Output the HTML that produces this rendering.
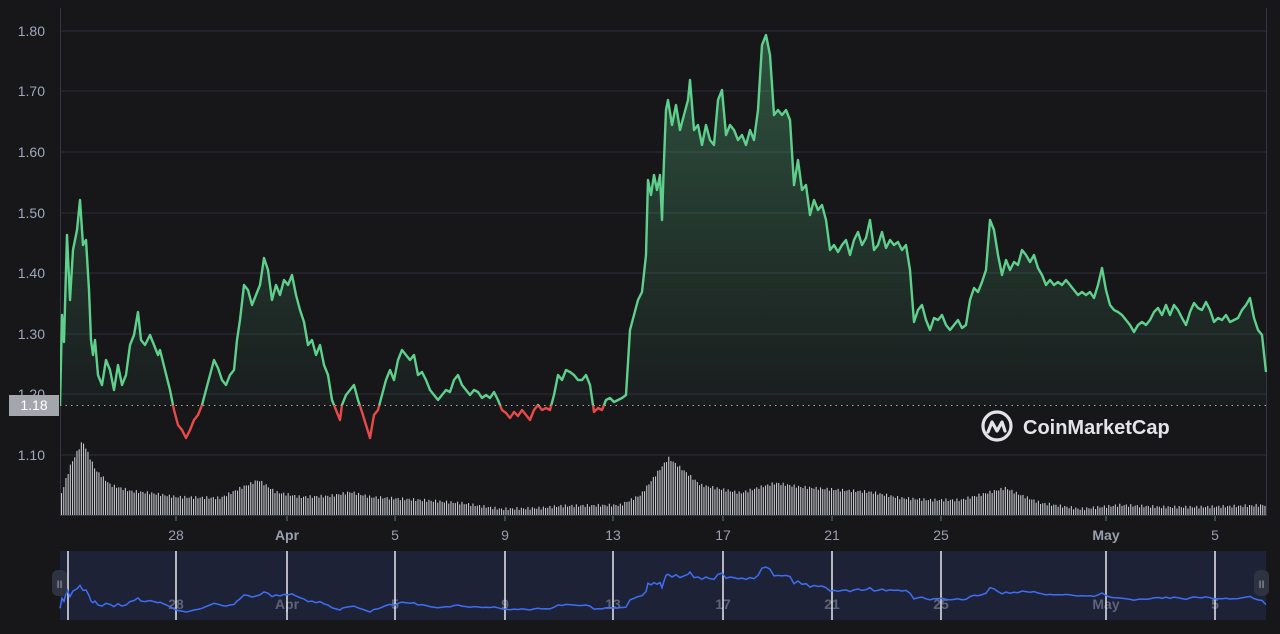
<!DOCTYPE html>
<html><head><meta charset="utf-8"><style>
html,body{margin:0;padding:0;background:#17171a;width:1280px;height:634px;overflow:hidden;font-family:"Liberation Sans",sans-serif}
svg{display:block}
</style></head><body>
<svg id="s" width="1280" height="634" xmlns="http://www.w3.org/2000/svg">
<defs>
<linearGradient id="g" gradientUnits="userSpaceOnUse" x1="0" y1="40" x2="0" y2="405">
<stop offset="0" stop-color="#5fd08c" stop-opacity="0.32"/><stop offset="1" stop-color="#5fd08c" stop-opacity="0.03"/></linearGradient>
<clipPath id="above"><rect x="60" y="0" width="1210" height="405"/></clipPath>
<clipPath id="below"><rect x="60" y="405" width="1210" height="100"/></clipPath>
</defs>
<g stroke="#2b2d3a" stroke-width="1">
<line x1="60" y1="31" x2="1266" y2="31"/><line x1="60" y1="91" x2="1266" y2="91"/><line x1="60" y1="152" x2="1266" y2="152"/><line x1="60" y1="213" x2="1266" y2="213"/><line x1="60" y1="273" x2="1266" y2="273"/><line x1="60" y1="334" x2="1266" y2="334"/><line x1="60" y1="394" x2="1266" y2="394"/><line x1="60" y1="455" x2="1266" y2="455"/>
</g>
<line x1="60.5" y1="8" x2="60.5" y2="516" stroke="#333645"/>
<line x1="1266.5" y1="8" x2="1266.5" y2="516" stroke="#333645"/>
<line x1="60" y1="515.5" x2="1267" y2="515.5" stroke="#333645"/>
<g fill="#a1a7bb" font-size="14" text-anchor="end">
<text x="45" y="36">1.80</text><text x="45" y="96">1.70</text><text x="45" y="157">1.60</text><text x="45" y="218">1.50</text><text x="45" y="278">1.40</text><text x="45" y="339">1.30</text><text x="45" y="399">1.20</text><text x="45" y="460">1.10</text>
</g>
<g id="vol" fill="#c4c6cc"></g>
<path id="fill" fill="url(#g)" clip-path="url(#above)"/>
<path id="lg" fill="none" stroke="#5fd08c" stroke-width="2.4" stroke-linejoin="round" clip-path="url(#above)"/>
<path id="lr" fill="none" stroke="#e84a4a" stroke-width="2.4" stroke-linejoin="round" clip-path="url(#below)"/>
<line x1="60" y1="405.5" x2="1266" y2="405.5" stroke="#aaa" stroke-dasharray="1.5,4"/>
<rect x="9" y="395" width="50" height="21" fill="#a3a6ad"/>
<text x="34" y="410" fill="#fff" font-size="14" text-anchor="middle">1.18</text>
<g transform="translate(982,411)" fill="none" stroke="#e3e4e8" stroke-width="3.2" stroke-linecap="round" stroke-linejoin="round">
<circle cx="15" cy="15" r="14"/>
<path d="M6 21 L10 11 L15 20 L20 11 L23 20"/>
</g>
<text x="1023" y="434" fill="#e3e4e8" font-size="20" font-weight="bold">CoinMarketCap</text>
<g stroke="#6b6f7d"><line x1="176" y1="516" x2="176" y2="521"/><line x1="287" y1="516" x2="287" y2="521"/><line x1="395" y1="516" x2="395" y2="521"/><line x1="505" y1="516" x2="505" y2="521"/><line x1="613" y1="516" x2="613" y2="521"/><line x1="723" y1="516" x2="723" y2="521"/><line x1="832" y1="516" x2="832" y2="521"/><line x1="941" y1="516" x2="941" y2="521"/><line x1="1106" y1="516" x2="1106" y2="521"/><line x1="1215" y1="516" x2="1215" y2="521"/></g>
<g fill="#9a9fae" font-size="14" text-anchor="middle">
<text x="176" y="540">28</text><text x="287" y="540" font-weight="bold">Apr</text><text x="395" y="540">5</text><text x="505" y="540">9</text><text x="613" y="540">13</text><text x="723" y="540">17</text><text x="832" y="540">21</text><text x="941" y="540">25</text><text x="1106" y="540" font-weight="bold">May</text><text x="1215" y="540">5</text>
</g>
<rect x="60" y="551" width="1206" height="69" fill="#1d2237"/>
<g fill="#5e6379" font-size="14" text-anchor="middle" font-weight="bold">
<text x="176" y="609">28</text><text x="287" y="609">Apr</text><text x="395" y="609">5</text><text x="505" y="609">9</text><text x="613" y="609">13</text><text x="723" y="609">17</text><text x="832" y="609">21</text><text x="941" y="609">25</text><text x="1106" y="609">May</text><text x="1215" y="609">5</text>
</g>
<g stroke="#e8e8ec" stroke-width="1.5"><line x1="68" y1="551" x2="68" y2="620"/><line x1="176" y1="551" x2="176" y2="620"/><line x1="287" y1="551" x2="287" y2="620"/><line x1="395" y1="551" x2="395" y2="620"/><line x1="505" y1="551" x2="505" y2="620"/><line x1="613" y1="551" x2="613" y2="620"/><line x1="723" y1="551" x2="723" y2="620"/><line x1="832" y1="551" x2="832" y2="620"/><line x1="941" y1="551" x2="941" y2="620"/><line x1="1106" y1="551" x2="1106" y2="620"/><line x1="1215" y1="551" x2="1215" y2="620"/></g>
<path id="nav" fill="none" stroke="#3d6ef5" stroke-width="1.5"/>
<rect x="52" y="570" width="15" height="26" rx="6" fill="#2f3241"/>
<text x="59.5" y="588" fill="#9aa" font-size="11" text-anchor="middle">II</text>
<rect x="1254" y="570" width="15" height="26" rx="6" fill="#2f3241"/>
<text x="1261.5" y="588" fill="#9aa" font-size="11" text-anchor="middle">II</text>
</svg>
<script>
var p=[60,405,62,315,64,342,67,235,70,300,73,250,77,230,80,200,83,245,86,240,89,290,91,340,93,355,95,340,98,375,102,385,106,360,110,370,114,390,118,365,122,385,126,375,130,345,134,335,138,312,141,340,145,345,150,335,154,345,158,355,160,350,165,370,170,390,174,410,178,425,182,430,186,438,190,430,194,420,198,415,202,405,206,390,210,375,214,360,218,368,222,380,226,385,230,375,234,370,237,340,240,320,244,285,248,290,252,305,256,295,260,285,264,258,268,270,272,300,276,285,280,295,284,280,288,285,292,275,296,295,300,310,304,322,308,345,312,340,316,355,320,345,324,365,328,375,332,400,336,410,340,420,342,405,346,395,350,390,354,385,358,400,362,412,366,425,370,438,374,415,378,410,382,395,386,380,390,370,394,380,398,360,402,350,406,355,410,360,414,355,418,375,422,372,426,380,430,390,434,395,438,400,442,395,446,390,450,392,454,380,458,375,462,385,466,390,470,395,474,390,478,392,482,398,486,395,490,398,494,392,498,400,502,410,506,413,510,418,514,412,518,416,522,410,526,415,530,420,534,410,538,405,542,410,546,408,550,410,554,395,558,375,562,380,566,370,570,372,574,375,578,380,582,380,586,375,590,385,594,412,598,408,602,410,606,400,610,398,614,402,618,400,622,398,626,395,630,330,634,315,638,300,642,292,646,255,648,180,651,195,654,175,657,190,660,175,662,220,664,160,666,110,668,100,672,125,676,105,680,130,684,115,688,100,690,80,694,130,698,125,702,145,706,125,710,140,714,145,718,100,722,90,726,135,730,125,734,130,738,140,742,135,746,145,750,130,754,140,758,110,762,45,766,35,770,55,774,115,778,110,782,115,786,110,790,120,794,185,798,160,802,190,806,185,810,215,814,200,818,210,822,205,826,220,830,250,834,245,838,252,842,245,846,240,850,255,854,240,858,232,862,245,866,238,870,220,874,250,878,245,882,232,886,248,890,240,894,245,898,242,902,250,906,245,910,270,914,322,918,310,922,305,926,320,930,330,934,318,938,320,942,315,946,325,950,330,954,325,958,320,962,328,966,325,970,300,974,288,978,292,982,282,986,270,990,220,994,230,998,255,1002,275,1006,260,1010,270,1014,262,1018,265,1022,250,1026,255,1030,262,1034,255,1038,268,1042,275,1046,285,1050,280,1054,285,1058,282,1062,285,1066,280,1070,285,1074,290,1078,295,1082,292,1086,295,1090,292,1094,298,1098,285,1102,268,1106,290,1110,305,1114,310,1118,312,1122,315,1126,320,1130,325,1134,332,1138,325,1142,322,1146,325,1150,320,1154,312,1158,308,1162,315,1166,305,1170,315,1174,305,1178,310,1182,318,1186,325,1190,312,1194,303,1198,308,1202,310,1206,302,1210,310,1214,322,1218,318,1222,320,1226,315,1230,322,1234,320,1238,318,1242,310,1246,305,1250,298,1254,318,1258,330,1262,335,1266,372];
var d="",n="";
for(var i=0;i<p.length;i+=2){d+=(i?"L":"M")+p[i]+" "+p[i+1];n+=(i?"L":"M")+p[i]+" "+(567+(p[i+1]-35)*45/403).toFixed(1);}
document.getElementById("lg").setAttribute("d",d);
document.getElementById("lr").setAttribute("d",d);
document.getElementById("fill").setAttribute("d",d+"L1266 405L60 405Z");
document.getElementById("nav").setAttribute("d",n);
var e=[62,490,70,465,82,441,95,470,110,485,130,491,150,493,176,497,220,498,240,488,258,480,275,492,300,497,330,496,350,492,370,497,420,500,460,503,500,509,540,508,560,506,620,505,640,495,655,475,668,458,685,472,700,485,740,493,760,487,775,483,800,487,840,490,870,492,900,498,930,500,960,500,990,492,1005,488,1020,495,1040,503,1080,509,1100,507,1120,505,1160,507,1200,507,1240,506,1266,505];
function env(x){for(var i=0;i<e.length-2;i+=2){if(x<=e[i+2]){var t=(x-e[i])/(e[i+2]-e[i]);return e[i+1]+t*(e[i+3]-e[i+1]);}}return 505;}
var v="";for(var x=61;x<1266;x+=2.2){var y=env(x)+Math.sin(x*1.7)*1.5;v+='<rect x="'+x.toFixed(1)+'" y="'+y.toFixed(1)+'" width="1.1" height="'+(515-y).toFixed(1)+'"/>';}
document.getElementById("vol").innerHTML=v;
</script>
</body></html>
